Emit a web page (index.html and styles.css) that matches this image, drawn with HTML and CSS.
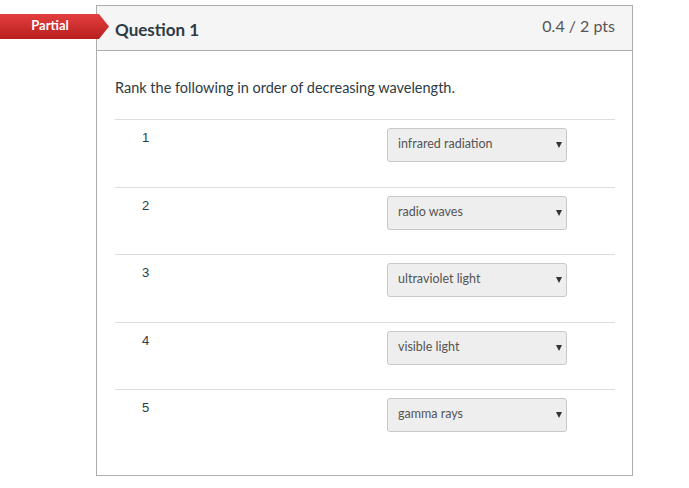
FILE: index.html
```html
<!DOCTYPE html>
<html lang="en">
<head>
    <meta charset="UTF-8">
    <title>Question 1</title>
    <link rel="stylesheet" href="styles.css">
</head>
<body>
    <div class="status-flag">Partial</div>
    <div class="question">
        <div class="question-header">
            <h2 class="question-name">Question 1</h2>
            <div class="question-points">0.4 / 2 pts</div>
        </div>
        <div class="question-body">
            <p class="question-text">Rank the following in order of decreasing wavelength.</p>
            <div class="answers">
                <div class="answer-row">
                    <div class="answer-num">1</div>
                    <div class="select-wrap">
                        <select class="answer-select"><option>infrared radiation</option></select>
                        <span class="select-arrow"></span>
                    </div>
                </div>
                <div class="answer-row">
                    <div class="answer-num">2</div>
                    <div class="select-wrap">
                        <select class="answer-select"><option>radio waves</option></select>
                        <span class="select-arrow"></span>
                    </div>
                </div>
                <div class="answer-row">
                    <div class="answer-num">3</div>
                    <div class="select-wrap">
                        <select class="answer-select"><option>ultraviolet light</option></select>
                        <span class="select-arrow"></span>
                    </div>
                </div>
                <div class="answer-row">
                    <div class="answer-num">4</div>
                    <div class="select-wrap">
                        <select class="answer-select"><option>visible light</option></select>
                        <span class="select-arrow"></span>
                    </div>
                </div>
                <div class="answer-row">
                    <div class="answer-num">5</div>
                    <div class="select-wrap">
                        <select class="answer-select"><option>gamma rays</option></select>
                        <span class="select-arrow"></span>
                    </div>
                </div>
            </div>
        </div>
    </div>
</body>
</html>
```

FILE: styles.css
```css
body {
    margin: 0;
    padding: 0;
    font-family: Lato, "Liberation Sans", sans-serif;
    background-color: #fff;
    color: #2d3b45;
    position: relative;
}
.status-flag {
    position: absolute;
    left: 0;
    top: 14px;
    width: 109px;
    height: 25px;
    line-height: 23px;
    padding-right: 9px;
    box-sizing: border-box;
    text-align: center;
    color: #fff;
    font-size: 13px;
    font-weight: bold;
    background: linear-gradient(#e3403f, #b81e1e);
    clip-path: polygon(0 0, 99px 0, 109px 50%, 99px 100%, 0 100%);
    z-index: 2;
}
.question {
    margin: 5px 0 0 96px;
    width: 537px;
    border: 1px solid #adadad;
    box-sizing: border-box;
}
.question-header {
    display: flex;
    justify-content: space-between;
    height: 44px;
    padding: 0 17px 0 18px;
    background-color: #f5f5f5;
    border-bottom: 1px solid #adadad;
}
.question-name {
    margin: 0;
    padding-top: 14px;
    font-size: 17px;
    font-weight: bold;
    line-height: 20px;
    color: #2d3b45;
}
.question-points {
    padding-top: 10px;
    font-size: 16px;
    line-height: 20px;
    color: #555;
}
.question-body {
    padding: 27px 17px 18px 18px;
}
.question-text {
    margin: 0 0 22px;
    font-size: 14.5px;
    line-height: 19px;
}
.answer-row {
    display: flex;
    height: 66.5px;
    border-top: 1px solid #ddd;
}
.answer-num {
    width: 272px;
    padding: 10px 0 0 27px;
    box-sizing: border-box;
    font-family: "Liberation Sans", Arial, sans-serif;
    font-size: 13px;
    line-height: 16px;
    color: #2d3b45;
}
.select-wrap {
    position: relative;
    margin-top: 8px;
    width: 180px;
    height: 34px;
}
.answer-select {
    appearance: none;
    -webkit-appearance: none;
    width: 100%;
    height: 100%;
    padding: 0 20px 3px 10px;
    font-family: Lato, sans-serif;
    font-size: 12.5px;
    color: #555;
    background-color: #eee;
    border: 1px solid #c8c8c8;
    border-radius: 3px;
    outline: none;
}
.select-arrow {
    position: absolute;
    right: 5px;
    top: 14px;
    width: 0;
    height: 0;
    border-left: 3px solid transparent;
    border-right: 3px solid transparent;
    border-top: 6px solid #333;
}
```
